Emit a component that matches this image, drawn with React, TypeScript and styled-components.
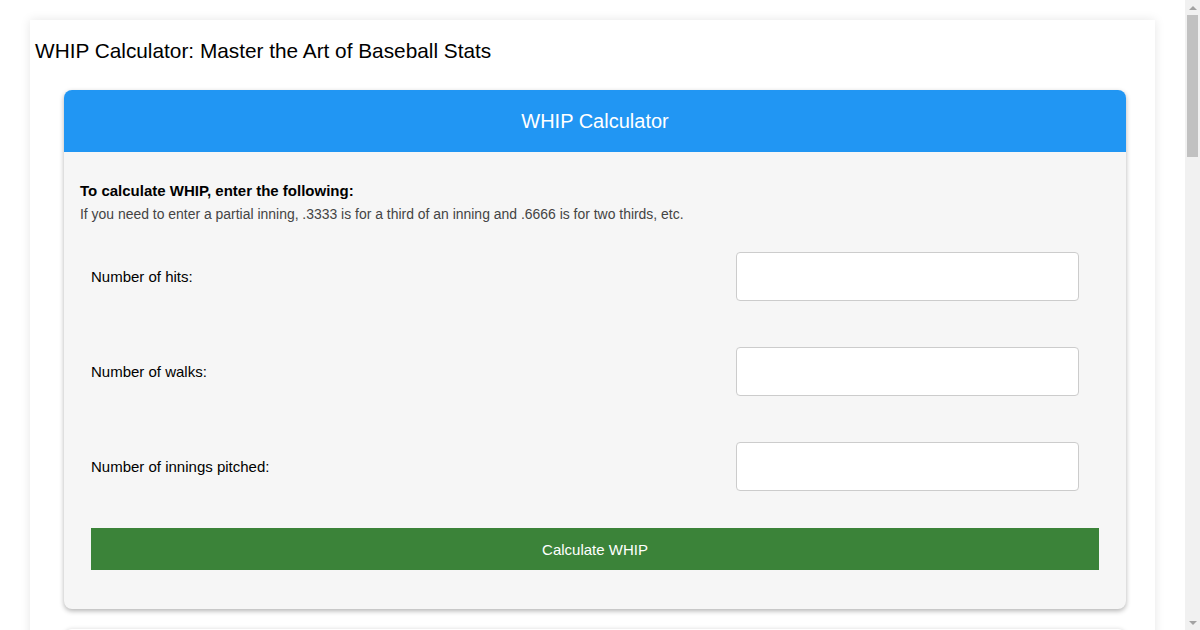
import React from 'react';
import styled, { createGlobalStyle } from 'styled-components';

const GlobalStyle = createGlobalStyle`
  body {
    margin: 0 15px 0 0;
    background: #fff;
    font-family: "Liberation Sans", Arial, sans-serif;
    color: #000;
  }
`;

const Page = styled.div`
  margin: 20px 30px 0;
  padding: 0 5px 40px;
  background: #fff;
  box-shadow: 0 0 10px rgba(0, 0, 0, 0.1);
  display: flow-root;
`;

const Title = styled.h1`
  margin: 18px 0 26px;
  font-size: 20.8px;
  font-weight: normal;
  line-height: 26px;
`;

const Card = styled.section`
  width: 1062px;
  margin: 0 0 20px 29px;
  background: #f6f6f6;
  border-radius: 8px;
  box-shadow: 0 2px 5px rgba(0, 0, 0, 0.3);
  overflow: hidden;
`;

const CardHeader = styled.div`
  height: 62px;
  background: #2196f3;
  color: #fff;
  font-size: 20px;
  display: flex;
  align-items: center;
  justify-content: center;
`;

const CardBody = styled.div`
  padding: 29px 16px 39px;
`;

const Lead = styled.h2`
  margin: 0;
  font-size: 15px;
  font-weight: bold;
  line-height: 20px;
`;

const Note = styled.p`
  margin: 3px 0 0;
  font-size: 13.95px;
  color: #444;
  line-height: 20px;
`;

const Form = styled.form`
  padding: 28px 11px 0;
  display: flex;
  flex-direction: column;
`;

const Row = styled.div`
  display: grid;
  grid-template-columns: 1fr 343px;
  align-items: center;
  padding-right: 20px;
  margin-bottom: 46px;
`;

const Label = styled.label`
  font-size: 15px;
`;

const Input = styled.input`
  box-sizing: border-box;
  width: 343px;
  height: 49px;
  border: 1px solid #ccc;
  border-radius: 4px;
  background: #fff;
  font-size: 15px;
  padding: 0 10px;
`;

const Button = styled.button`
  margin-top: -9px;
  height: 42px;
  border: 0;
  background: #3b8339;
  color: #fff;
  font-size: 15px;
  font-family: inherit;
  cursor: pointer;
`;

const NextCard = styled.div`
  width: 1062px;
  margin-left: 29px;
  height: 200px;
  background: #fff;
  border-radius: 8px;
  box-shadow: 0 0 4px rgba(0, 0, 0, 0.15);
`;

/* drawn scrollbar, the headless browser paints none */
const ScrollTrack = styled.div`
  position: fixed;
  top: 0;
  right: 0;
  width: 15px;
  height: 100vh;
  background: #f1f1f1;
  display: flex;
  flex-direction: column;
  align-items: center;
`;

const Arrow = styled.div<{ $down?: boolean }>`
  height: 15px;
  width: 15px;
  display: flex;
  align-items: center;
  justify-content: center;
  margin-top: ${(p) => (p.$down ? 'auto' : '0')};
  &::after {
    content: '';
    border-left: 4px solid transparent;
    border-right: 4px solid transparent;
    ${(p) => (p.$down ? 'border-top: 4px solid #a3a3a3;' : 'border-bottom: 4px solid #a3a3a3;')}
  }
`;

const Thumb = styled.div`
  width: 11px;
  height: 142px;
  background: #c1c1c1;
`;

const fields = ['Number of hits:', 'Number of walks:', 'Number of innings pitched:'];

export default function App() {
  return (
    <>
      <GlobalStyle />
      <Page>
        <Title>WHIP Calculator: Master the Art of Baseball Stats</Title>
        <Card>
          <CardHeader>WHIP Calculator</CardHeader>
          <CardBody>
            <Lead>To calculate WHIP, enter the following:</Lead>
            <Note>
              If you need to enter a partial inning, .3333 is for a third of an inning and .6666 is for two thirds, etc.
            </Note>
            <Form onSubmit={(e) => e.preventDefault()}>
              {fields.map((f) => (
                <Row key={f}>
                  <Label>{f}</Label>
                  <Input type="text" />
                </Row>
              ))}
              <Button type="submit">Calculate WHIP</Button>
            </Form>
          </CardBody>
        </Card>
        <NextCard />
      </Page>
      <ScrollTrack>
        <Arrow />
        <Thumb />
        <Arrow $down />
      </ScrollTrack>
    </>
  );
}
